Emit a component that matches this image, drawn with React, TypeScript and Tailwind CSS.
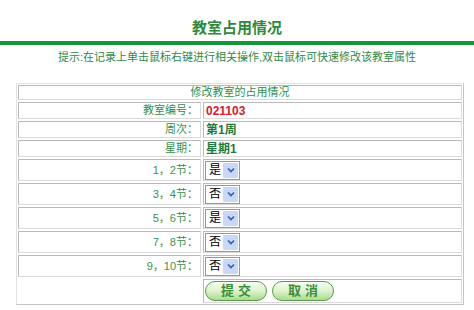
import React from "react";

const font = "font-['Liberation_Sans','Noto_Sans_CJK_SC',sans-serif]";

function Cell({ className = "", children }: { className?: string; children?: React.ReactNode }) {
  return (
    <div
      className={`border border-t-[#b9b9b9] border-l-[#b9b9b9] border-b-[#dadada] border-r-[#dadada] bg-white ${className}`}
    >
      {children}
    </div>
  );
}

function FakeSelect({ value }: { value: string }) {
  return (
    <div className="flex h-[19px] w-[35px] items-stretch border border-[#7f9db9] bg-white">
      <div className="flex flex-1 items-center pl-[3px] text-[12px] leading-none text-black">{value}</div>
      <div className="m-[1px] flex w-[15px] items-center justify-center rounded-[1px] bg-[#c8d8f8]">
        <svg width="8" height="6" viewBox="0 0 8 6">
          <path d="M1 1.5 L4 4.5 L7 1.5" fill="none" stroke="#3a5aa8" strokeWidth="1.6" />
        </svg>
      </div>
    </div>
  );
}

function PillButton({ label }: { label: string }) {
  return (
    <div className="flex h-[20px] w-[62px] items-center justify-center rounded-full border-[1.5px] border-[#5a9a48] bg-gradient-to-b from-[#f6fdf2] via-[#dcf3cc] to-[#a9db8c] text-[13px] font-bold tracking-[4px] text-[#3a8f3a]">
      <span className="pl-[4px]">{label}</span>
    </div>
  );
}

export default function App() {
  const textRows = [
    { label: "教室编号：", value: "021103", cls: "text-[#d4202c] font-bold" },
    { label: "周次：", value: "第1周", cls: "text-[#1f7a3c] font-bold" },
    { label: "星期：", value: "星期1", cls: "text-[#1f7a3c] font-bold" },
  ];
  const selRows = [
    { label: "1，2节：", value: "是" },
    { label: "3，4节：", value: "否" },
    { label: "5，6节：", value: "是" },
    { label: "7，8节：", value: "否" },
    { label: "9，10节：", value: "否" },
  ];
  return (
    <div className={`h-[310px] w-[474px] overflow-hidden bg-white ${font}`}>
      <div className="pt-[19px] text-center text-[15px] font-bold leading-[18px] text-[#2e8a3a]">教室占用情况</div>
      <div className="mt-[4px] h-[4px] bg-[#16963a]" />
      <div className="mt-[5px] text-center text-[11px] leading-[14px] text-[#2d8a48]">
        提示:在记录上单击鼠标右键进行相关操作,双击鼠标可快速修改该教室属性
      </div>
      <div className="ml-[16px] mt-[19px] flex w-[448px] flex-col gap-[2px] border border-t-[#e2e2e2] border-l-[#e2e2e2] border-b-[#c4c4c4] border-r-[#c4c4c4] p-[1px] text-[11px]">
        <Cell className="flex h-[15px] items-center justify-center leading-none text-[#2f8f4a]">修改教室的占用情况</Cell>
        {textRows.map((r) => (
          <div key={r.label} className="flex h-[17px] gap-[2px]">
            <Cell className="flex w-[183px] items-center justify-end pr-[2px] text-[#2f8f4a]">{r.label}</Cell>
            <Cell className={`flex flex-1 items-center pl-[2px] text-[12px] ${r.cls}`}>{r.value}</Cell>
          </div>
        ))}
        {selRows.map((r) => (
          <div key={r.label} className="flex h-[22px] gap-[2px]">
            <Cell className="flex w-[183px] items-center justify-end pr-[2px] text-[#3a9050]">{r.label}</Cell>
            <Cell className="flex flex-1 items-center pl-[1px]">
              <FakeSelect value={r.value} />
            </Cell>
          </div>
        ))}
        <div className="flex h-[24px] gap-[2px]">
          <div className="w-[183px]" />
          <Cell className="flex flex-1 items-center gap-[5px] pl-[1px]">
            <PillButton label="提交" />
            <PillButton label="取消" />
          </Cell>
        </div>
      </div>
    </div>
  );
}
